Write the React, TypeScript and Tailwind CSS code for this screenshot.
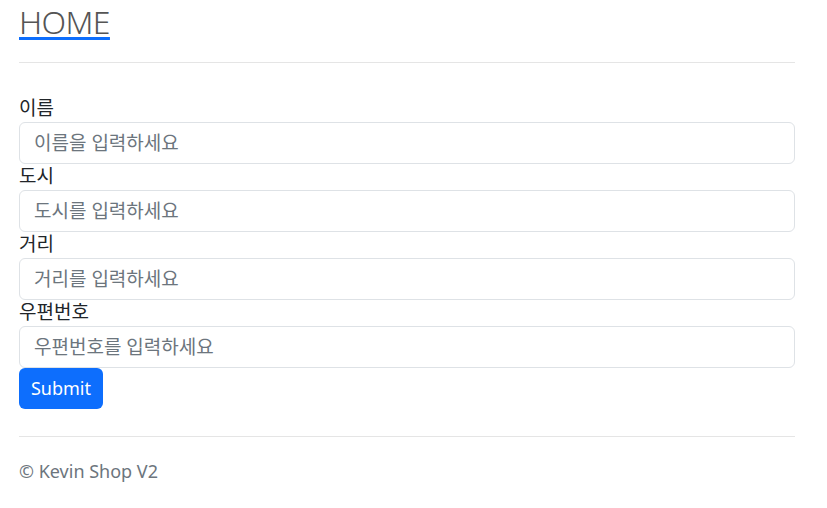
const font = { fontFamily: '"Noto Sans", "Noto Sans CJK KR", sans-serif' };

const fields = [
  { label: "이름", placeholder: "이름을 입력하세요" },
  { label: "도시", placeholder: "도시를 입력하세요" },
  { label: "거리", placeholder: "거리를 입력하세요" },
  { label: "우편번호", placeholder: "우편번호를 입력하세요" },
];

export default function App() {
  return (
    <div className="min-h-screen bg-white text-[#212529]" style={font}>
      <div className="ml-[19px] w-[776px]">
        <h1 className="pt-[2px] text-[32px] leading-[39px] font-light tracking-[-0.6px]">
          <a
            href="#"
            className="text-[#555] underline decoration-[#0d6efd] decoration-[3px] underline-offset-[3px]"
          >
            HOME
          </a>
        </h1>
        <hr className="mt-[21px] border-t border-[#e5e5e5]" />
        <form className="mt-[33px] flex flex-col" onSubmit={(e) => e.preventDefault()}>
          {fields.map((f) => (
            <div key={f.label} className="flex flex-col">
              <label className="h-[26px] text-[19px] leading-[24px]">{f.label}</label>
              <input
                placeholder={f.placeholder}
                className="h-[42px] rounded-[6px] border border-[#dee2e6] px-[14px] text-[19px] outline-none placeholder:text-[#6c757d]"
              />
            </div>
          ))}
          <button
            type="submit"
            className="h-[41px] w-[84px] rounded-[6px] bg-[#0d6efd] text-[18px] text-white"
          >
            Submit
          </button>
        </form>
        <hr className="mt-[27px] border-t border-[#e5e5e5]" />
        <footer className="mt-[22px] text-[18px] leading-[24px] text-[#6c757d]">© Kevin Shop V2</footer>
      </div>
    </div>
  );
}
